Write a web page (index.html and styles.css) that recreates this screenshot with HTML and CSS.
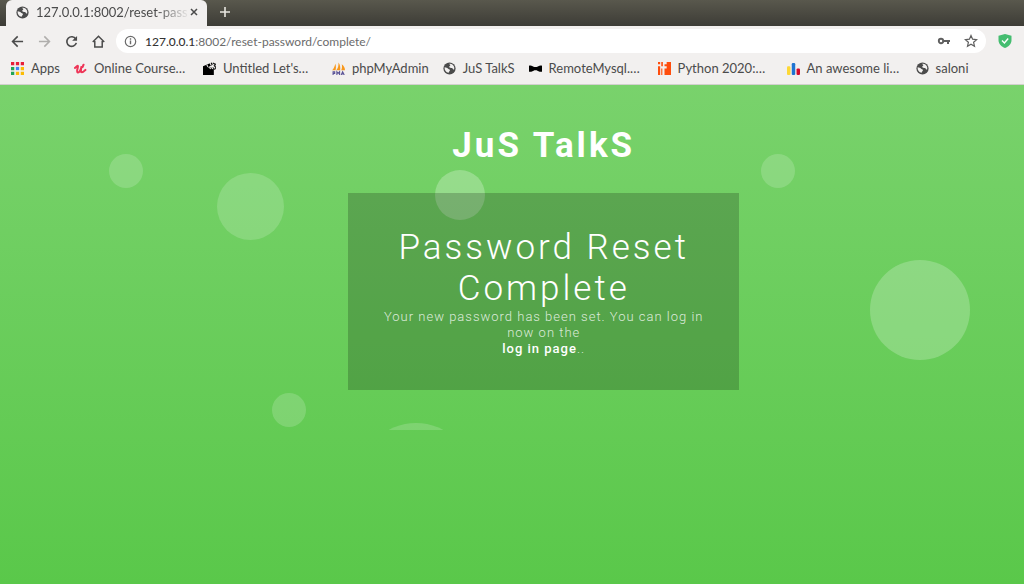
FILE: index.html
```html
<!DOCTYPE html>
<html lang="en">
<head>
    <meta charset="UTF-8">
    <meta name="viewport" content="width=device-width, initial-scale=1.0">
    <title>JuS TalkS</title>
    <link rel="stylesheet" href="styles.css">
</head>
<body>
    <svg class="symbols" aria-hidden="true">
        <symbol id="globe" viewBox="0 0 16 16">
            <circle cx="8" cy="8" r="7.5" fill="#4b4b4b"/>
            <path d="M2 6.5c2 .3 3.200 .5 4 1.500.8 1 2.200 .8 2.500 1.800.3 1.200-1.500 1.700-1.500 3.500-3-.3-5.300-3-5-6.800zM7.500 2.300c2.500-.8 5 1 6 3.300.5 1.200.5 3 0 4-1-.2-1.200-1.800-2.500-2.200-1.500-.4-3-.2-3.300-1.400-.2-1 1.500-1 1.300-2.200-.1-.7-1.200-.7-1.500-1.500z" fill="#f2f0ef"/>
        </symbol>
    </svg>

    <div class="tab-strip">
        <div class="tab">
            <svg class="icon-small"><use href="#globe"/></svg>
            <span class="tab-title">127.0.0.1:8002/reset-pass</span>
            <button class="tab-close" aria-label="Close tab">
                <svg viewBox="0 0 8 8"><path d="M1 1l6 6M7 1L1 7" stroke="#4b4b4b" stroke-width="1.500"/></svg>
            </button>
        </div>
        <button class="new-tab" aria-label="New tab">
            <svg viewBox="0 0 10 10"><path d="M5 0v10M0 5h10" stroke="#e8e6e0" stroke-width="1.600"/></svg>
        </button>
    </div>

    <div class="toolbar">
        <button class="nav-btn" aria-label="Back">
            <svg viewBox="0 0 14 14" fill="none" stroke="#4b4b4b" stroke-width="1.700"><path d="M13 7H2M7.200 1.500L1.700 7l5.500 5.500"/></svg>
        </button>
        <button class="nav-btn" aria-label="Forward" disabled>
            <svg viewBox="0 0 14 14" fill="none" stroke="#b0aeac" stroke-width="1.700"><path d="M1 7h11M6.800 1.500L12.300 7l-5.500 5.500"/></svg>
        </button>
        <button class="nav-btn" aria-label="Reload">
            <svg viewBox="0 0 14 14"><path d="M11.600 4.300A5.200 5.200 0 1 0 12.200 8.500" fill="none" stroke="#4b4b4b" stroke-width="1.800"/><path d="M13 1v5.300H7.700z" fill="#4b4b4b"/></svg>
        </button>
        <button class="nav-btn" aria-label="Home">
            <svg viewBox="0 0 14 14" fill="none" stroke="#4b4b4b" stroke-width="1.600"><path d="M.8 7.600L7 1.400l6.200 6.200M3 6.500v6.300h8V6.500"/></svg>
        </button>
        <div class="address-bar">
            <svg class="icon-small" viewBox="0 0 14 14"><circle cx="7" cy="7" r="5.600" fill="none" stroke="#6b6b6b" stroke-width="1.300"/><path d="M7 6v4M7 3.600v1.400" stroke="#6b6b6b" stroke-width="1.500"/></svg>
            <div class="url"><b>127.0.0.1</b>:8002/reset-password/complete/</div>
            <button class="bar-btn" aria-label="Saved passwords">
                <svg viewBox="0 0 14 14"><circle cx="4" cy="7" r="2.200" fill="none" stroke="#5f5f5f" stroke-width="1.900"/><path d="M7 6h6v2h-1v2h-2V8H7z" fill="#5f5f5f"/></svg>
            </button>
            <button class="bar-btn" aria-label="Bookmark this page">
                <svg viewBox="0 0 14 14"><path d="M7 1.500l1.600 3.700 4 .4-3 2.700.9 4L7 10.200l-3.500 2.100.9-4-3-2.700 4-.4z" fill="none" stroke="#5f5f5f" stroke-width="1.200"/></svg>
            </button>
        </div>
        <button class="shield" aria-label="Ad blocker">
            <svg viewBox="0 0 14 14"><path d="M7 0l6.500 1.700V6c0 4-3 6.700-6.500 8C3.500 12.700.5 10 .5 6V1.700z" fill="#45bd70"/><path d="M4 6.600l2.400 2.300L10.200 4.500" fill="none" stroke="#fff" stroke-width="1.400"/></svg>
        </button>
    </div>

    <nav class="bookmarks">
        <a href="#">
            <svg viewBox="0 0 12 12">
                <path d="M0 0h3v3H0zM4.500 0h3v3h-3zM9 0h3v3H9z" fill="#e8203a"/>
                <path d="M0 4.500h3v3H0zM0 9h3v3H0z" fill="#22a455"/>
                <path d="M4.500 4.500h3v3h-3z" fill="#4285f4"/>
                <path d="M9 4.500h3v3H9zM4.500 9h3v3h-3zM9 9h3v3H9z" fill="#fbbc05"/>
            </svg>
            <span>Apps</span>
        </a>
        <a href="#" class="long">
            <svg viewBox="0 0 12 12"><path d="M.8 5.500C2 4.500 3.300 3 3.600 3.800S2 8.800 3.300 9.500s2.800-1.500 3.800-5.500c-1 3.500-1 5.500.2 5.500s2-1 3.200-2.200M8.800 2.500l-.8 2" fill="none" stroke="#ee3557" stroke-width="1.900" stroke-linecap="round"/></svg>
            <span>Online Course…</span>
        </a>
        <a href="#" class="long">
            <svg viewBox="0 0 12 12"><path d="M0 4l8-3.500 1 2L4 5h6v7H0z" fill="#000"/><path d="M6.500 1l1 2M3.500 2.500l1 2M6 5l1 1.500M8 5l1 1.500" stroke="#f2f0ef"/><path d="M9 1l2.500 1-1 1.500L12 5l-1.500 2" fill="none" stroke="#222" stroke-width="1.200"/></svg>
            <span>Untitled Let's…</span>
        </a>
        <a href="#">
            <svg viewBox="0 0 12 12"><path d="M0 7.500C1.500 6.500 2.500 4 3 1.500c.8 2 .8 4 .3 6zM4 7.500C6 5.500 6 3 6 .5c1.500 2 2 5 1.500 7zM8.500 7.500C9.500 5.500 9.300 3.500 9 2c2 1.500 3 3.500 3 5.500z" fill="#f8981d"/><path d="M1 12V9h1.500v1.500H1M4.500 12V9l1.200 1.500L7 9v3M8.500 12l1.300-3 1.500 3M9 11h2" fill="none" stroke="#5a5296" stroke-width="1"/></svg>
            <span>phpMyAdmin</span>
        </a>
        <a href="#">
            <svg><use href="#globe"/></svg>
            <span>JuS TalkS</span>
        </a>
        <a href="#" class="long">
            <svg viewBox="0 0 12 12"><path d="M0 3.500c2-.8 4 .8 5 1.200h2c1-.4 3-2 5-1.200v5.500c-2 .5-4-1-5-1.500H5C4 8 2 9.500 0 9z" fill="#000"/></svg>
            <span>RemoteMysql.…</span>
        </a>
        <a href="#" class="long">
            <svg viewBox="0 0 12 12"><path d="M0 0h2v2H0zM0 4h2v8H0zM3 0h9v12H6V6h2V4H6V2h2V0H3zM3 0h1.500v4H3zM3 6h1v6H3z" fill="#ff4d0d"/></svg>
            <span>Python 2020:…</span>
        </a>
        <a href="#" class="long">
            <svg viewBox="0 0 12 12"><rect y="4" width="3.200" height="8" rx="1" fill="#fdd835"/><rect x="4.400" y="1" width="3.200" height="11" rx="1" fill="#1e74d2"/><rect x="8.800" y="6" width="3.200" height="6" rx="1" fill="#d50a2c"/></svg>
            <span>An awesome li…</span>
        </a>
        <a href="#">
            <svg><use href="#globe"/></svg>
            <span>saloni</span>
        </a>
    </nav>

    <main class="viewport">
        <div class="page">
            <ul class="circles" aria-hidden="true">
                <li></li>
                <li></li>
                <li></li>
                <li></li>
                <li></li>
                <li></li>
                <li></li>
            </ul>
            <h1>JuS TalkS</h1>
            <section class="card">
                <h2>Password Reset Complete</h2>
                <p>Your new password has been set. You can log in now on the<br><a href="#">log in page</a>..</p>
            </section>
        </div>
    </main>
</body>
</html>
```
FILE: styles.css
```css
* {
    box-sizing: border-box;
}
body {
    margin: 0;
    min-height: 100vh;
    display: flex;
    flex-direction: column;
    overflow: hidden;
    font-family: Lato, "Noto Sans", sans-serif;
    font-size: 13px;
    color: #4b4b4b;
    background-color: #f2f0ef;
}
button {
    display: flex;
    align-items: center;
    justify-content: center;
    padding: 0;
    border: none;
    background: none;
    cursor: pointer;
}
.symbols {
    display: none;
}
.icon-small {
    width: 13px;
    height: 13px;
    flex-shrink: 0;
}

/* Browser tabs */
.tab-strip {
    display: flex;
    height: 26px;
    background: linear-gradient(#59584d, #3d3c36);
}
.tab {
    display: flex;
    align-items: center;
    width: 201px;
    margin-left: 6px;
    padding: 0 9px 2px 10px;
    border-radius: 6px 6px 0 0;
    background-color: #f2f0ef;
}
.tab-title {
    flex: 1;
    margin-left: 7px;
    white-space: nowrap;
    -webkit-mask-image: linear-gradient(to right, #000 78%, transparent);
    mask-image: linear-gradient(to right, #000 78%, transparent);
}
.tab-close svg {
    width: 8px;
    height: 8px;
}
.new-tab {
    width: 36px;
    padding-bottom: 2px;
}
.new-tab svg {
    width: 10px;
    height: 10px;
}

/* Toolbar */
.toolbar {
    display: flex;
    align-items: center;
    height: 30px;
    padding: 0 12px 0 4px;
}
.nav-btn {
    width: 27px;
    height: 24px;
}
.nav-btn svg {
    width: 13px;
    height: 13px;
}
.address-bar {
    flex: 1;
    display: flex;
    align-items: center;
    height: 24px;
    margin: 0 12px 0 4px;
    padding: 0 8px;
    border-radius: 12px;
    background-color: #fff;
}
.url {
    flex: 1;
    margin-left: 8px;
    font-size: 12px;
    color: #6b6b6b;
}
.url b {
    font-weight: 500;
    color: #333;
}
.bar-btn {
    width: 14px;
    margin-left: 13px;
}
.bar-btn svg,
.shield svg {
    width: 14px;
    height: 14px;
}

/* Bookmarks */
.bookmarks {
    display: flex;
    align-items: center;
    height: 29px;
    padding: 0 11px 4px;
    gap: 14px;
    border-bottom: 1px solid #d2d0ce;
}
.bookmarks a {
    display: flex;
    align-items: center;
    gap: 7px;
    color: inherit;
    text-decoration: none;
    white-space: nowrap;
}
.bookmarks .long {
    min-width: 115px;
}
.bookmarks svg {
    width: 13px;
    height: 13px;
}

/* Page */
.viewport {
    flex: 1;
    overflow: hidden;
    background: linear-gradient(#79d26c, #5ac84a);
}
.page {
    position: relative;
    width: calc(106% + 2px);
    padding-top: 40px;
    font-family: Roboto, sans-serif;
    color: #fff;
    text-align: center;
}
h1 {
    margin: 0;
    font-size: 35px;
    font-weight: 700;
    line-height: 41px;
    letter-spacing: 3px;
}
.card {
    position: relative;
    width: 36%;
    margin: 27px auto 0;
    padding: 34px 33px 33px;
    background-color: rgba(0, 0, 0, 0.2);
}
.card h2 {
    margin: 0;
    font-size: 35px;
    font-weight: 300;
    line-height: 41px;
    letter-spacing: 3px;
}
.card p {
    margin: 0;
    font-size: 13px;
    font-weight: 300;
    line-height: 16px;
    letter-spacing: 1px;
    color: rgba(255, 255, 255, 0.8);
}
.card a {
    font-weight: 500;
    color: #fff;
    text-decoration: none;
}

/* Floating circles */
.circles {
    position: absolute;
    top: 0;
    left: 0;
    width: 100%;
    height: 345px;
    margin: 0;
    padding: 0;
    overflow: hidden;
    list-style: none;
}
.circles li {
    position: absolute;
    width: 34px;
    height: 34px;
    border-radius: 50%;
    background-color: rgba(255, 255, 255, 0.17);
}
.circles li:nth-child(1) {
    left: 10%;
    top: 69px;
}
.circles li:nth-child(2) {
    left: 20%;
    top: 88px;
    width: 67px;
    height: 67px;
}
.circles li:nth-child(3) {
    left: 25%;
    top: 308px;
}
.circles li:nth-child(4) {
    left: 40%;
    top: 85px;
    width: 50px;
    height: 50px;
    background-color: rgba(255, 255, 255, 0.25);
}
.circles li:nth-child(5) {
    left: 70%;
    top: 69px;
}
.circles li:nth-child(6) {
    left: 80%;
    top: 175px;
    width: 100px;
    height: 100px;
    background-color: rgba(255, 255, 255, 0.22);
}
.circles li:nth-child(7) {
    left: 33%;
    top: 338px;
    width: 114px;
    height: 114px;
}
```
